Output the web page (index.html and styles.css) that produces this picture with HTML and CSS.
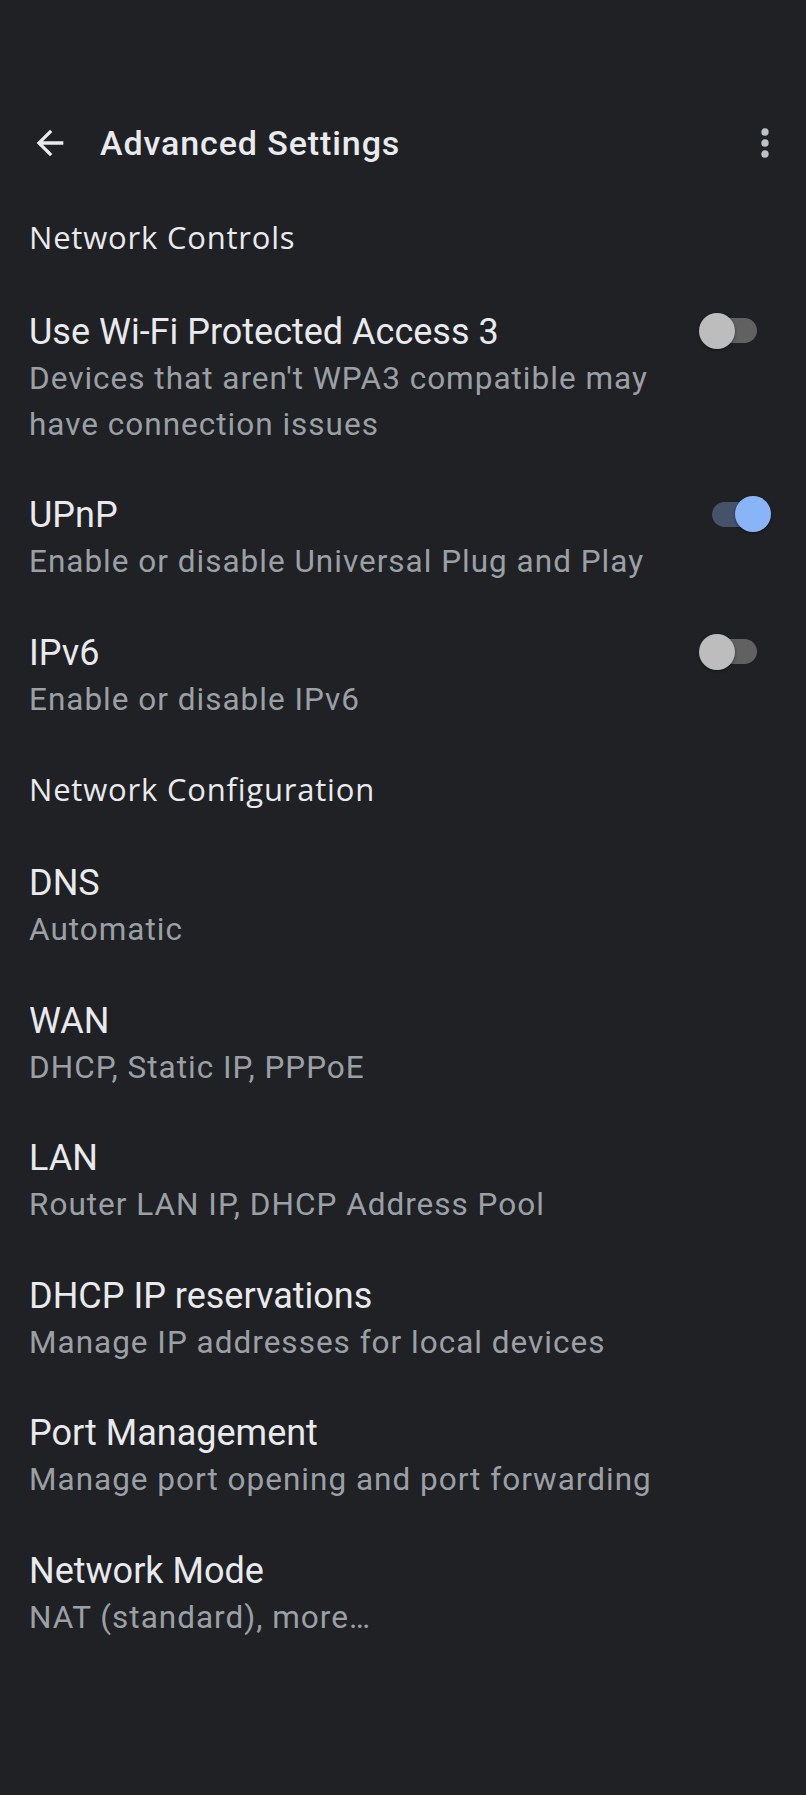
FILE: index.html
```html
<!DOCTYPE html>
<html lang="en">
<head>
    <meta charset="UTF-8">
    <meta name="viewport" content="width=device-width, initial-scale=1.0">
    <title>Advanced Settings</title>
    <link rel="stylesheet" href="styles.css">
</head>
<body>
    <div class="screen">
        <div class="appBar">
            <div class="iconButton backButton">
                <svg viewBox="0 0 24 24" class="icon"><path d="M20 11H7.83l5.59-5.59L12 4l-8 8 8 8 1.41-1.41L7.83 13H20v-2z"/></svg>
            </div>
            <div class="appBarTitle">Advanced Settings</div>
            <div class="iconButton menuButton">
                <svg viewBox="0 0 24 24" class="icon"><circle cx="12" cy="6" r="2"/><circle cx="12" cy="12" r="2"/><circle cx="12" cy="18" r="2"/></svg>
            </div>
        </div>

        <div class="sectionHeader">Network Controls</div>

        <div class="listItem">
            <div class="itemText">
                <div class="itemTitle">Use Wi-Fi Protected Access 3</div>
                <div class="itemSummary">Devices that aren't WPA3 compatible may have connection issues</div>
            </div>
            <div class="switchBox">
                <div class="switch switchOff"><span class="thumb"></span></div>
            </div>
        </div>

        <div class="listItem">
            <div class="itemText">
                <div class="itemTitle">UPnP</div>
                <div class="itemSummary">Enable or disable Universal Plug and Play</div>
            </div>
            <div class="switchBox">
                <div class="switch switchOn"><span class="thumb"></span></div>
            </div>
        </div>

        <div class="listItem">
            <div class="itemText">
                <div class="itemTitle">IPv6</div>
                <div class="itemSummary">Enable or disable IPv6</div>
            </div>
            <div class="switchBox">
                <div class="switch switchOff"><span class="thumb"></span></div>
            </div>
        </div>

        <div class="sectionHeader">Network Configuration</div>

        <div class="listItem">
            <div class="itemText">
                <div class="itemTitle">DNS</div>
                <div class="itemSummary">Automatic</div>
            </div>
        </div>

        <div class="listItem">
            <div class="itemText">
                <div class="itemTitle">WAN</div>
                <div class="itemSummary">DHCP, Static IP, PPPoE</div>
            </div>
        </div>

        <div class="listItem">
            <div class="itemText">
                <div class="itemTitle">LAN</div>
                <div class="itemSummary">Router LAN IP, DHCP Address Pool</div>
            </div>
        </div>

        <div class="listItem">
            <div class="itemText">
                <div class="itemTitle">DHCP IP reservations</div>
                <div class="itemSummary">Manage IP addresses for local devices</div>
            </div>
        </div>

        <div class="listItem">
            <div class="itemText">
                <div class="itemTitle">Port Management</div>
                <div class="itemSummary">Manage port opening and port forwarding</div>
            </div>
        </div>

        <div class="listItem">
            <div class="itemText">
                <div class="itemTitle">Network Mode</div>
                <div class="itemSummary">NAT (standard), more…</div>
            </div>
        </div>
    </div>
</body>
</html>
```

FILE: styles.css
```css
body {
    margin: 0;
    padding: 0;
    background-color: #202124;
    font-family: Roboto, "Liberation Sans", sans-serif;
    color: #e8eaed;
}
.screen {
    min-height: 1795px;
}
.appBar {
    display: flex;
    align-items: center;
    height: 100px;
    padding-top: 92.5px;
}
.iconButton {
    display: flex;
    justify-content: center;
    align-items: center;
}
.icon {
    fill: #e8eaed;
}
.backButton {
    width: 40px;
    height: 40px;
    margin-left: 30px;
}
.backButton .icon {
    width: 40px;
    height: 40px;
}
.menuButton {
    width: 44px;
    height: 44px;
    margin-left: auto;
    margin-right: 19px;
}
.menuButton .icon {
    width: 44px;
    height: 44px;
    fill: #bdc1c6;
}
.appBarTitle {
    margin-left: 30px;
    font-size: 34px;
    font-weight: 500;
    letter-spacing: 0.9px;
}
.sectionHeader {
    padding: 21px 0 26px 29px;
    font-family: "Open Sans", Roboto, sans-serif;
    font-size: 31px;
    letter-spacing: 0.8px;
    line-height: 46px;
    color: #e8eaed;
}
/* first group sits a pixel lower under the app bar */
.appBar + .sectionHeader {
    padding-bottom: 27px;
}
.listItem {
    display: flex;
    align-items: flex-start;
    padding: 22px 42px 22.5px 29px;
}
.itemText {
    flex: 1;
}
.itemTitle {
    font-size: 36px;
    line-height: 47px;
    color: #e8eaed;
}
.itemSummary {
    font-size: 31.5px;
    letter-spacing: 1px;
    line-height: 46px;
    color: #9aa0a6;
    max-width: 640px;
}
.switchBox {
    display: flex;
    align-items: center;
    height: 44px;
}
.switch {
    position: relative;
    width: 52px;
    height: 25px;
    border-radius: 13px;
}
.thumb {
    position: absolute;
    top: -5.5px;
    width: 36px;
    height: 36px;
    border-radius: 50%;
    box-shadow: 0 1px 3px rgba(0, 0, 0, 0.45);
}
.switchOff {
    margin-right: 7px;
    background-color: #616161;
}
.switchOff .thumb {
    left: -6px;
    background-color: #bdbdbd;
}
.switchOn {
    background-color: #46516a;
}
.switchOn .thumb {
    left: 23px;
    background-color: #8ab4f8;
}
```
